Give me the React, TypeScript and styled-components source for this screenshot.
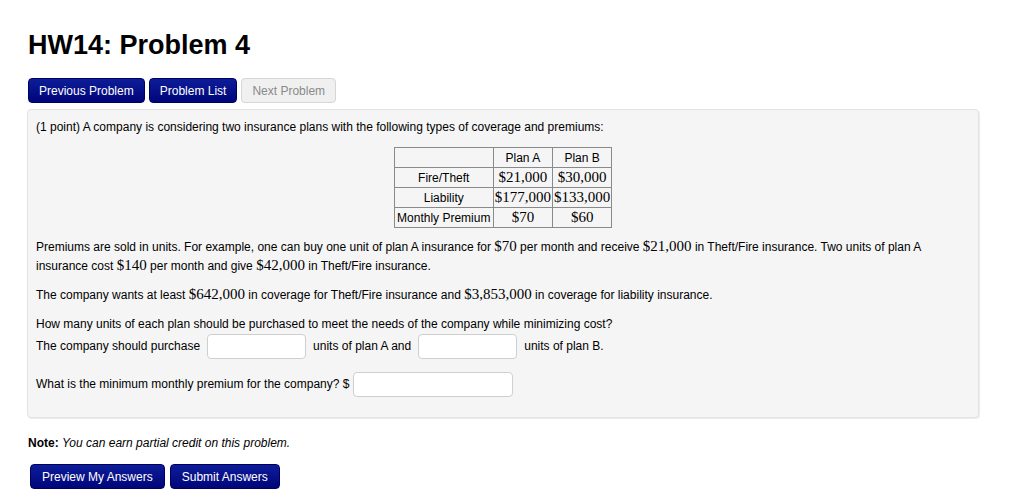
import React from 'react'
import styled, { createGlobalStyle } from 'styled-components'

const GlobalStyle = createGlobalStyle`
  html, body { margin: 0; padding: 0; background: #fff; }
  body {
    font-family: "Liberation Sans", Arial, Helvetica, sans-serif;
    font-size: 12px;
    color: #000;
  }
`

const Page = styled.div`
  width: 952px;
  padding: 0 45px 0 27px;
`

const Title = styled.h1`
  margin: 0;
  padding-top: 30px;
  font-size: 27px;
  line-height: 30px;
  font-weight: bold;
  padding-left: 1px;
`

const NavRow = styled.div`
  display: flex;
  gap: 4px;
  margin-top: 18px;
  padding-left: 1px;
`

const Btn = styled.button<{ $disabled?: boolean; $pad?: number }>`
  height: 25px;
  padding: 0 ${p => p.$pad ?? 10}px;
  font-family: inherit;
  font-size: 12px;
  border-radius: 4px;
  cursor: pointer;
  border: 1px solid ${p => (p.$disabled ? '#d6d6d6' : '#00005e')};
  color: ${p => (p.$disabled ? '#8a8a8a' : '#fff')};
  background: ${p => (p.$disabled ? '#f0f0f0' : 'linear-gradient(to bottom, #0d1d98, #00057a)')};
`

const ProblemBox = styled.div`
  margin-top: 6px;
  background: #f5f5f5;
  border: 1px solid #e3e3e3;
  border-radius: 4px;
  box-shadow: 1px 1px 1px rgba(0, 0, 0, 0.08);
  padding: 8px 8px 20px 8px;
  line-height: 19px;
`

const Para = styled.p<{ $last?: boolean }>`
  margin: 0 0 ${p => (p.$last ? 0 : 10)}px 0;
`

const TableWrap = styled.div`
  display: flex;
  justify-content: center;
  margin: 10px 0 10px 0;
`

const Table = styled.table`
  border-collapse: collapse;
  td {
    border: 1px solid #8a8a8a;
    text-align: center;
    padding: 0 1px;
    height: 19px;
    line-height: 18px;
  }
`

const LabelCell = styled.td`
  min-width: 96px;
`

const PlanCell = styled.td`
  width: 56px;
`

const M = styled.span`
  font-family: "Liberation Serif", "Times New Roman", serif;
  font-size: 15px;
  line-height: 1;
`

const AnswerLine = styled.div<{ $gap: number }>`
  display: flex;
  align-items: center;
  gap: ${p => p.$gap}px;
  height: 25px;
`

const Input = styled.input<{ $w: number }>`
  width: ${p => p.$w}px;
  height: 25px;
  box-sizing: border-box;
  border: 1px solid #cfcfcf;
  border-radius: 4px;
  background: #fff;
  padding: 0 4px;
  margin: 0;
`

const Spacer = styled.div`
  height: 13px;
`

const Note = styled.div`
  margin-top: 18px;
  padding-left: 1px;
  line-height: 14px;
  b { font-weight: bold; }
  i { font-style: italic; }
`

const SubmitRow = styled.div`
  display: flex;
  gap: 5px;
  margin-top: 14px;
  padding-left: 3px;
`

const App = () => {
  return (
    <>
      <GlobalStyle />
      <Page>
        <Title>HW14: Problem 4</Title>
        <NavRow>
          <Btn>Previous Problem</Btn>
          <Btn>Problem List</Btn>
          <Btn $disabled>Next Problem</Btn>
        </NavRow>
        <ProblemBox>
          <Para $last>
            (1 point) A company is considering two insurance plans with the following types of coverage and premiums:
          </Para>
          <TableWrap>
            <Table>
              <tbody>
                <tr>
                  <LabelCell></LabelCell>
                  <PlanCell>Plan A</PlanCell>
                  <PlanCell>Plan B</PlanCell>
                </tr>
                <tr>
                  <LabelCell>Fire/Theft</LabelCell>
                  <PlanCell><M>$21,000</M></PlanCell>
                  <PlanCell><M>$30,000</M></PlanCell>
                </tr>
                <tr>
                  <LabelCell>Liability</LabelCell>
                  <PlanCell><M>$177,000</M></PlanCell>
                  <PlanCell><M>$133,000</M></PlanCell>
                </tr>
                <tr>
                  <LabelCell>Monthly Premium</LabelCell>
                  <PlanCell><M>$70</M></PlanCell>
                  <PlanCell><M>$60</M></PlanCell>
                </tr>
              </tbody>
            </Table>
          </TableWrap>
          <Para>
            Premiums are sold in units. For example, one can buy one unit of plan A insurance for <M>$70</M> per month and receive <M>$21,000</M> in Theft/Fire insurance. Two units of plan A insurance cost <M>$140</M> per month and give <M>$42,000</M> in Theft/Fire insurance.
          </Para>
          <Para>
            The company wants at least <M>$642,000</M> in coverage for Theft/Fire insurance and <M>$3,853,000</M> in coverage for liability insurance.
          </Para>
          <Para $last>
            How many units of each plan should be purchased to meet the needs of the company while minimizing cost?
          </Para>
          <AnswerLine $gap={7}>
            <span>The company should purchase</span>
            <Input $w={99} />
            <span>units of plan A and</span>
            <Input $w={99} />
            <span>units of plan B.</span>
          </AnswerLine>
          <Spacer />
          <AnswerLine $gap={4}>
            <span>What is the minimum monthly premium for the company? $</span>
            <Input $w={160} />
          </AnswerLine>
        </ProblemBox>
        <Note>
          <b>Note:</b> <i>You can earn partial credit on this problem.</i>
        </Note>
        <SubmitRow>
          <Btn $pad={11}>Preview My Answers</Btn>
          <Btn $pad={11}>Submit Answers</Btn>
        </SubmitRow>
      </Page>
    </>
  )
}

export default App
